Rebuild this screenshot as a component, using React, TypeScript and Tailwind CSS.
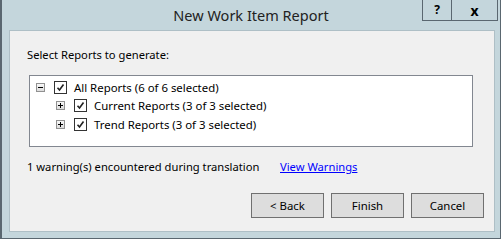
import React from 'react';

const font = { fontFamily: '"Noto Sans", "Open Sans", sans-serif' };

function Expander({ open }: { open?: boolean }) {
  return (
    <div className="flex h-[9px] w-[9px] items-center justify-center border border-[#919191] bg-gradient-to-b from-[#f8f8f8] to-[#dcdcdc]">
      <svg width="7" height="7" viewBox="0 0 7 7">
        <rect x="1" y="3" width="5" height="1" fill="#000" />
        {!open && <rect x="3" y="1" width="1" height="5" fill="#000" />}
      </svg>
    </div>
  );
}

function Check() {
  return (
    <div className="flex h-[13px] w-[13px] items-center justify-center border border-[#333333] bg-white">
      <svg width="9" height="9" viewBox="0 0 9 9">
        <path d="M1.5 4.8 L3.5 7 L7.5 1.5" fill="none" stroke="#222" strokeWidth="1.6" />
      </svg>
    </div>
  );
}

function TreeRow({ level, open, label }: { level: number; open?: boolean; label: string }) {
  return (
    <div className="flex h-[18.5px] items-center" style={{ paddingLeft: 6 + level * 20 }}>
      <Expander open={open} />
      <div className="ml-[9px]">
        <Check />
      </div>
      <span className="ml-[7px] text-[11.4px] leading-none text-black">{label}</span>
    </div>
  );
}

function Btn({ children }: { children: React.ReactNode }) {
  return (
    <button className="flex h-[25px] w-[73px] items-center justify-center border border-[#707070] bg-[#dddddd] text-[11.4px] text-black">
      {children}
    </button>
  );
}

export default function App() {
  return (
    <div className="h-[240px] w-[503px] overflow-hidden bg-white" style={font}>
      <div className="flex h-[239px] w-[501px] flex-col border-b border-l-2 border-r border-[#5a6770] bg-[#c4d6dc]">
        {/* Title bar */}
        <div className="relative flex h-[30px] items-start">
          <div className="absolute left-0 right-0 top-[5px] text-center text-[14.5px] leading-[20px] text-[#222]">
            New Work Item Report
          </div>
          <div className="absolute right-[2px] top-0 flex h-[21px]">
            <div className="flex w-[29px] items-center justify-center border-b border-l border-[#5a6770] text-[12px] font-bold text-black">
              ?
            </div>
            <div className="flex w-[47px] items-center justify-center border-b border-l border-r border-[#5a6770] text-[14px] font-bold text-black">
              x
            </div>
          </div>
        </div>
        {/* Client area */}
        <div className="ml-[7px] flex h-[202px] w-[486px] flex-col border border-[#aebfc6] bg-[#f0f0f0]">
          <div className="ml-[17px] mt-[16px] text-[11.2px] leading-[16px] text-black">Select Reports to generate:</div>
          <div className="ml-[19px] mt-[12px] h-[72px] w-[444px] border border-[#828790] bg-white pt-[2px]">
            <TreeRow level={0} open label="All Reports (6 of 6 selected)" />
            <TreeRow level={1} label="Current Reports (3 of 3 selected)" />
            <TreeRow level={1} label="Trend Reports (3 of 3 selected)" />
          </div>
          <div className="ml-[17px] mt-[12px] flex items-center text-[11.2px] leading-[16px]">
            <span className="w-[253px] text-black">1 warning(s) encountered during translation</span>
            <span className="text-[#0000ff] underline">View Warnings</span>
          </div>
          <div className="ml-[241px] mt-[18px] flex gap-[7px]">
            <Btn>&lt; Back</Btn>
            <Btn>Finish</Btn>
            <Btn>Cancel</Btn>
          </div>
        </div>
      </div>
    </div>
  );
}
